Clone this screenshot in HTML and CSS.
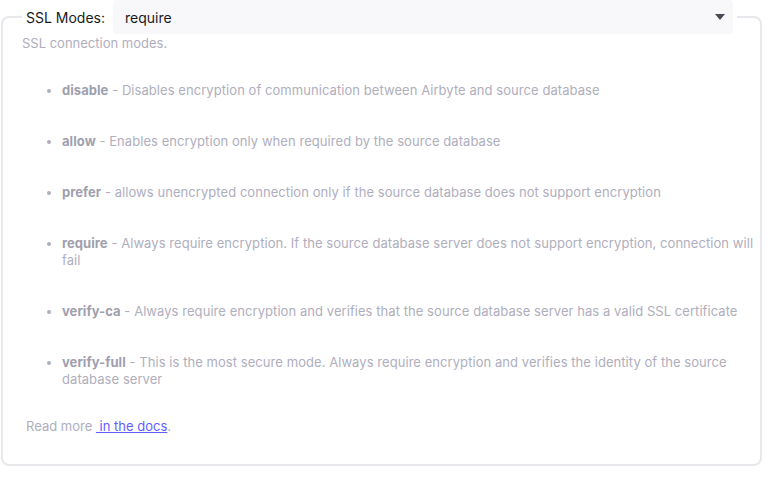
FILE: index.html
```html
<!DOCTYPE html>
<html>
<head>
<meta charset="utf-8">
<link rel="stylesheet" href="styles.css">
</head>
<body>
<fieldset class="group">
  <legend class="group-legend">
    <span class="label">SSL Modes:</span>
    <span class="select">
      <span class="select-value">require</span>
      <svg class="caret" width="10" height="6" viewBox="0 0 10 6"><path d="M0 0H10L5 6Z" fill="#4a4a57"/></svg>
    </span>
  </legend>
  <div class="desc">SSL connection modes.</div>
  <ul class="modes">
    <li><b>disable</b> - Disables encryption of communication between Airbyte and source database</li>
    <li><b>allow</b> - Enables encryption only when required by the source database</li>
    <li><b>prefer</b> - allows unencrypted connection only if the source database does not support encryption</li>
    <li><b>require</b> - Always require encryption. If the source database server does not support encryption, connection will fail</li>
    <li><b>verify-ca</b> - Always require encryption and verifies that the source database server has a valid SSL certificate</li>
    <li><b>verify-full</b> - This is the most secure mode. Always require encryption and verifies the identity of the source database server</li>
  </ul>
  <div class="more">Read more <a href="#" class="link">&nbsp;in the docs</a>.</div>
</fieldset>
</body>
</html>
```
FILE: styles.css
```css
html, body {
  margin: 0;
  padding: 0;
  background: #ffffff;
}
body {
  font-family: Inter, "Noto Sans", sans-serif;
  font-size: 13px;
  line-height: 17px;
  color: #afaebd;
}
.group {
  box-sizing: border-box;
  width: 761px;
  height: 466px;
  margin: 0 0 0 1px;
  padding: 0 3px 0 19px;
  border: 2px solid #e8e8ed;
  border-radius: 8px;
}
.group-legend {
  display: flex;
  align-items: center;
  gap: 8px;
  margin-left: 0;
  padding: 0 4px;
}
.label {
  font-size: 14px;
  color: #1a1a21;
}
.select {
  display: flex;
  align-items: center;
  justify-content: space-between;
  box-sizing: border-box;
  width: 620px;
  height: 34px;
  padding: 0 8px 0 12px;
  background: #f8f8fa;
  border-radius: 4px;
  font-size: 14px;
  color: #1a1a21;
}
.caret {
  display: block;
}
.desc {
  margin: 1px 0 0;
}
.modes {
  margin: 30px 0 0;
  padding-left: 40px;
  letter-spacing: 0.06px;
}
.modes li {
  margin-bottom: 34px;
}
.modes li:last-child {
  margin-bottom: 30px;
}
.modes b {
  font-weight: 700;
  color: #a09fae;
}
.more {
  padding-left: 4px;
}
.link {
  color: #615eff;
  text-decoration: underline;
}
```
